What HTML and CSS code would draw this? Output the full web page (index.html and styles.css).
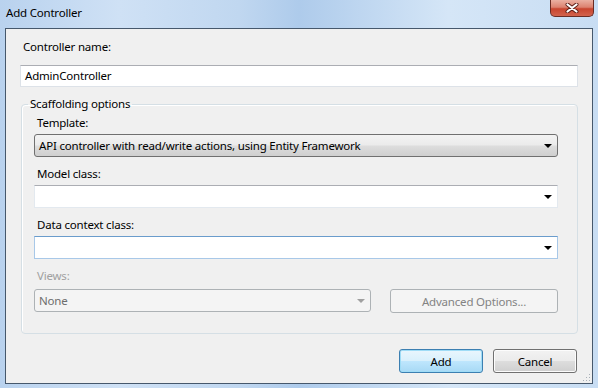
FILE: index.html
```html
<!DOCTYPE html>
<html lang="en">
<head>
  <meta charset="UTF-8">
  <title>Add Controller</title>
  <link rel="stylesheet" href="styles.css">
</head>
<body>
  <div class="window">
    <div class="titlebar">
      <div class="title">Add Controller</div>
      <div class="close-btn">
        <svg width="14" height="10" viewBox="0 0 14 10">
          <path d="M2.5 1.5 L11.5 8.5 M11.5 1.5 L2.5 8.5" stroke="#5a1e16" stroke-width="4" stroke-linecap="round"/>
          <path d="M2.5 1.5 L11.5 8.5 M11.5 1.5 L2.5 8.5" stroke="#fff" stroke-width="2.2" stroke-linecap="round"/>
        </svg>
      </div>
    </div>
    <div class="client">
      <div class="name-label">Controller name:</div>
      <div class="textbox">AdminController</div>

      <fieldset class="group">
        <legend>Scaffolding options</legend>

        <div class="field-label">Template:</div>
        <div class="combo combo-readonly">
          <span>API controller with read/write actions, using Entity Framework</span>
          <span class="arrow"></span>
        </div>

        <div class="field-label spaced">Model class:</div>
        <div class="combo combo-edit">
          <span></span>
          <span class="arrow"></span>
        </div>

        <div class="field-label spaced">Data context class:</div>
        <div class="combo combo-edit combo-focus">
          <span></span>
          <span class="arrow"></span>
        </div>

        <div class="field-label spaced disabled views-label">Views:</div>
        <div class="views-row">
          <div class="combo combo-disabled">
            <span>None</span>
            <span class="arrow"></span>
          </div>
          <div class="btn btn-disabled">Advanced Options...</div>
        </div>
      </fieldset>

      <div class="buttons">
        <div class="btn btn-default">Add</div>
        <div class="btn btn-normal">Cancel</div>
      </div>

      <svg class="grip" width="9" height="9" viewBox="0 0 9 9">
        <rect x="7" y="1" width="1" height="1" fill="#a8b0b8"/>
        <rect x="4" y="4" width="1" height="1" fill="#a8b0b8"/>
        <rect x="7" y="4" width="1" height="1" fill="#a8b0b8"/>
        <rect x="1" y="7" width="1" height="1" fill="#a8b0b8"/>
        <rect x="4" y="7" width="1" height="1" fill="#a8b0b8"/>
        <rect x="7" y="7" width="1" height="1" fill="#a8b0b8"/>
      </svg>
    </div>
  </div>
</body>
</html>
```

FILE: styles.css
```css
body {
  margin: 0;
  padding: 0;
  font-family: 'Noto Sans', Arial, sans-serif;
  font-size: 11.5px;
  letter-spacing: -0.2px;
  color: #000;
}
.window {
  width: 598px;
  height: 388px;
  box-sizing: border-box;
  padding: 0 5px 4px 5px;
  background: linear-gradient(90deg, #b9d2ee 0%, #cfe1f5 20%, #c0d7f0 40%, #aecbeb 50%, #d5e6f7 75%, #c8ddf3 100%);
  display: flex;
  flex-direction: column;
}
.titlebar {
  height: 28px;
  display: flex;
  justify-content: space-between;
  align-items: flex-start;
}
.title {
  padding: 5px 0 0 1px;
  line-height: 16px;
  color: #000;
}
.close-btn {
  width: 44px;
  height: 17px;
  margin-right: -1px;
  box-sizing: border-box;
  border: 1px solid #6a2c24;
  border-top: none;
  border-radius: 0 0 5px 5px;
  background: linear-gradient(180deg, #eab0a2 0%, #dc8270 45%, #c8452f 55%, #d2634d 100%);
  display: flex;
  align-items: center;
  justify-content: center;
}
.client {
  flex: 1;
  background: #f0f0f0;
  border: 1px solid #46586c;
  padding: 0 14px;
  display: flex;
  flex-direction: column;
  position: relative;
}
.name-label {
  padding: 10px 0 0 3px;
  line-height: 16px;
}
.textbox {
  margin-top: 10px;
  height: 22px;
  box-sizing: border-box;
  background: #fff;
  border: 1px solid #dde2e8;
  border-top-color: #abadb3;
  padding: 0 4px;
  line-height: 20px;
}
.group {
  margin: 9px 0 0 1px;
  padding: 0 19px 20px 12px;
  border: 1px solid #d5dfe5;
  border-radius: 4px;
  box-shadow: inset 1px 1px 0 #fff;
}
.group legend {
  padding: 0 2px;
  margin-left: -6px;
  line-height: 16px;
}
.field-label {
  line-height: 16px;
  padding-left: 3px;
  margin-top: 3px;
  margin-bottom: 3px;
}
.field-label.spaced {
  margin-top: 9px;
}
.views-label {
  margin-bottom: 5px;
}
.disabled {
  color: #a0a0a0;
}
.combo {
  height: 23px;
  box-sizing: border-box;
  display: flex;
  align-items: center;
  justify-content: space-between;
  padding: 0 5px 0 4px;
}
.arrow {
  width: 0;
  height: 0;
  border-left: 4px solid transparent;
  border-right: 4px solid transparent;
  border-top: 4px solid #000;
  margin-top: 1px;
}
.combo-readonly {
  border: 1px solid #707070;
  border-radius: 3px;
  background: linear-gradient(180deg, #f3f3f3 0%, #ebebeb 48%, #dddddd 52%, #cfcfcf 100%);
}
.combo-edit {
  background: #fff;
  border: 1px solid #e3e9ef;
  border-top-color: #abadb3;
}
.combo-focus {
  border-color: #a8c8e8;
  border-top-color: #6a9ccc;
}
.combo-disabled {
  flex: 0 0 337px;
  background: #f4f4f4;
  border: 1px solid #adb2b5;
  border-radius: 3px;
  color: #6d6d6d;
}
.combo-disabled .arrow {
  border-top-color: #a0a0a0;
}
.views-row {
  display: flex;
  justify-content: space-between;
}
.btn {
  height: 23px;
  box-sizing: border-box;
  border-radius: 3px;
  display: flex;
  align-items: center;
  justify-content: center;
}
.btn-disabled {
  width: 168px;
  height: 24px;
  background: #f4f4f4;
  border: 1px solid #adb2b5;
  color: #838383;
}
.buttons {
  margin-top: 15px;
  display: flex;
  justify-content: flex-end;
  gap: 10px;
  padding-right: 1px;
}
.buttons .btn {
  width: 84px;
  height: 24px;
}
.btn-default {
  border: 1px solid #3c7fb1;
  background: linear-gradient(180deg, #eaf6fd 0%, #d9f0fc 48%, #bee6fd 52%, #a7d9f5 100%);
  box-shadow: inset 0 0 0 1px #9fdcf6;
}
.btn-normal {
  border: 1px solid #707070;
  background: linear-gradient(180deg, #f2f2f2 0%, #ebebeb 48%, #dddddd 52%, #cfcfcf 100%);
  box-shadow: inset 0 0 0 1px #fcfcfc;
}
.grip {
  position: absolute;
  right: 1px;
  bottom: 1px;
}
```
